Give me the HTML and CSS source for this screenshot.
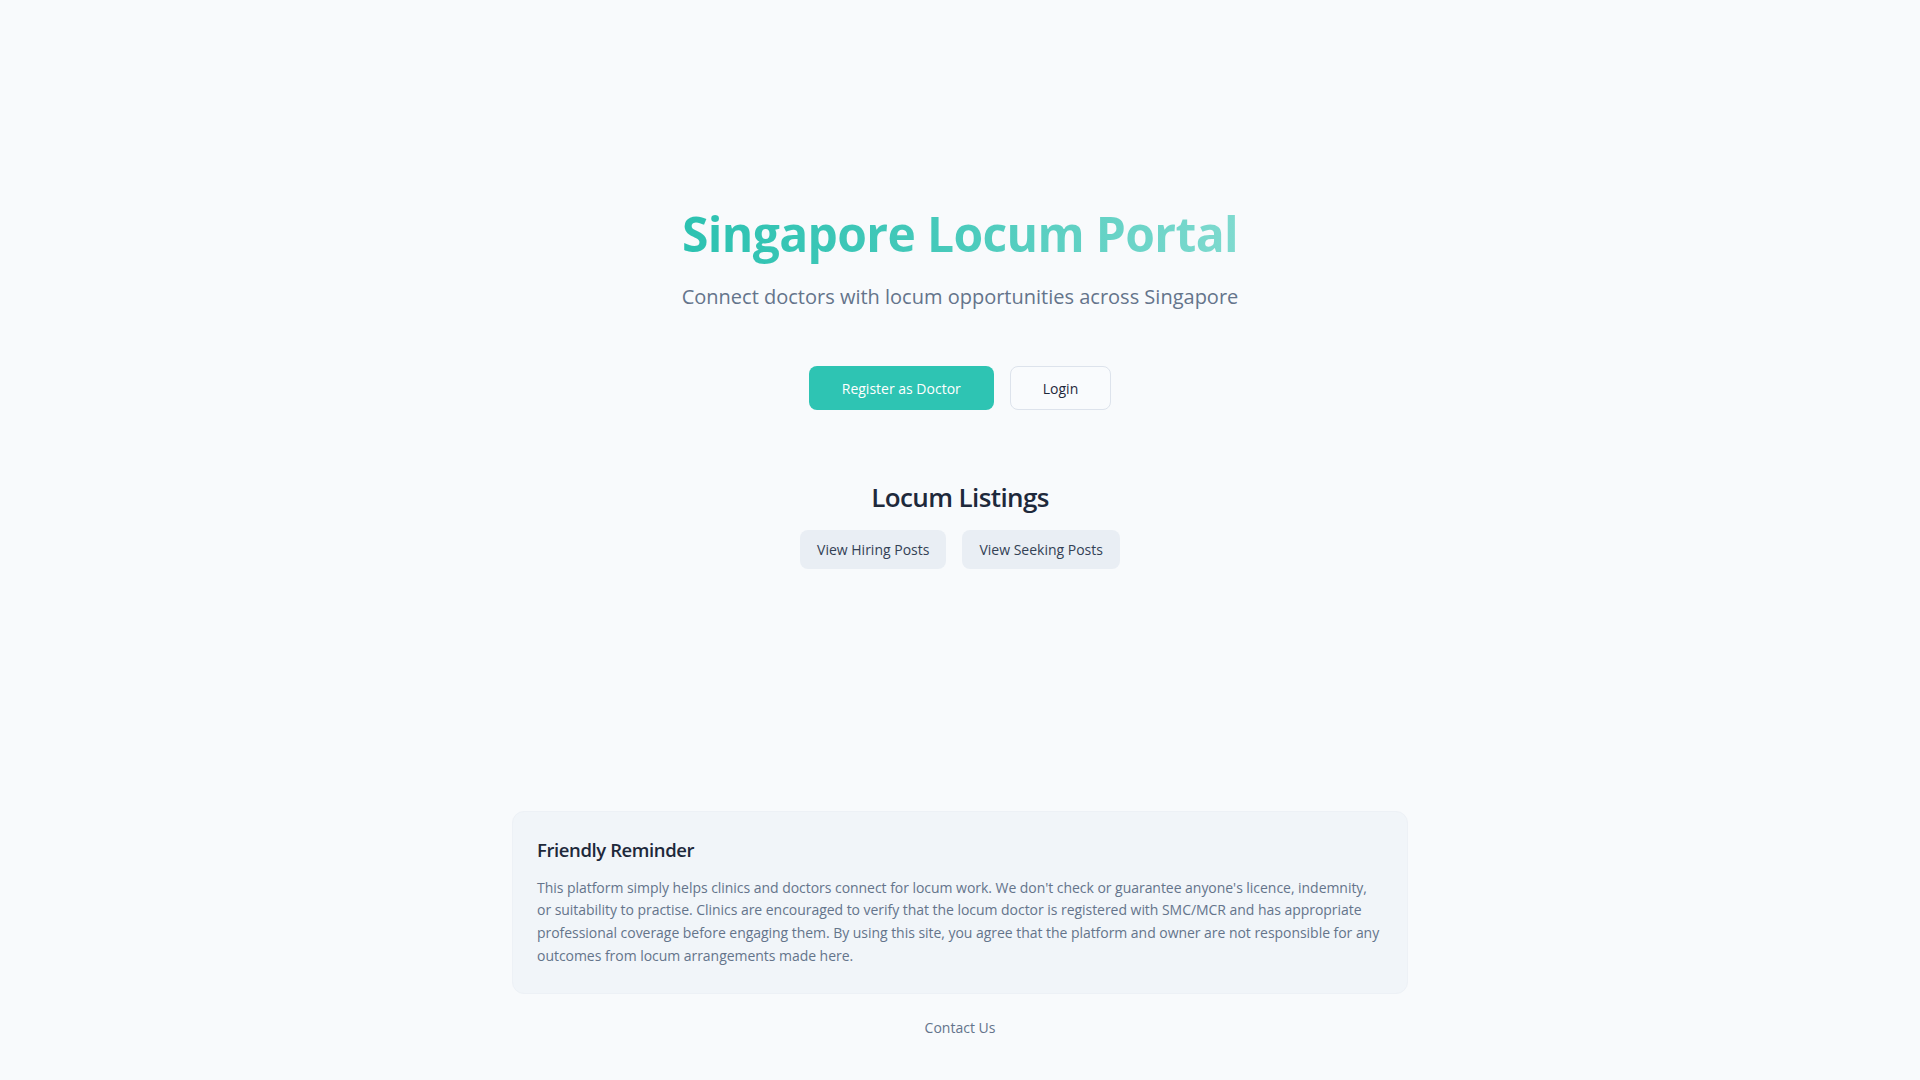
FILE: index.html
```html
<!DOCTYPE html>
<html lang="en">
<head>
<meta charset="utf-8">
<title>Singapore Locum Portal</title>
<link rel="stylesheet" href="styles.css">
</head>
<body>
<main class="page">
  <section class="hero">
    <h1 class="title">Singapore Locum Portal</h1>
    <p class="subtitle">Connect doctors with locum opportunities across Singapore</p>
    <div class="actions">
      <a class="btn btn-primary" href="#">Register as Doctor</a>
      <a class="btn btn-outline" href="#">Login</a>
    </div>
    <h2 class="listings-title">Locum Listings</h2>
    <div class="listings-actions">
      <a class="btn-soft" href="#">View Hiring Posts</a>
      <a class="btn-soft" href="#">View Seeking Posts</a>
    </div>
  </section>
  <section class="reminder">
    <h3 class="reminder-title">Friendly Reminder</h3>
    <p class="reminder-text">This platform simply helps clinics and doctors connect for locum work. We don't check or guarantee anyone's licence, indemnity, or suitability to practise. Clinics are encouraged to verify that the locum doctor is registered with SMC/MCR and has appropriate professional coverage before engaging them. By using this site, you agree that the platform and owner are not responsible for any outcomes from locum arrangements made here.</p>
  </section>
  <footer class="footer">
    <a class="footer-link" href="#">Contact Us</a>
  </footer>
</main>
</body>
</html>
```

FILE: styles.css
```css
* { box-sizing: border-box; }
html, body { margin: 0; padding: 0; }
body {
  background: #f8fafc;
  font-family: "Open Sans", "Noto Sans", sans-serif;
  color: #1e293b;
  min-height: 100vh;
}
a { text-decoration: none; }
.page {
  display: flex;
  flex-direction: column;
  align-items: center;
  padding-top: 203.5px;
}
.hero {
  display: flex;
  flex-direction: column;
  align-items: center;
}
.title {
  margin: 0;
  font-size: 48px;
  line-height: 60px;
  font-weight: 700;
  letter-spacing: -0.65px;
  background: linear-gradient(90deg, #2cc2b1 0%, #45c9ba 45%, #7fdacf 100%);
  -webkit-background-clip: text;
  background-clip: text;
  color: transparent;
}
.subtitle {
  margin: 19.5px 0 0;
  font-size: 20px;
  line-height: 28px;
  color: #64748b;
}
.actions {
  margin-top: 55px;
  display: flex;
  gap: 16px;
}
.btn {
  height: 44px;
  display: inline-flex;
  align-items: center;
  justify-content: center;
  padding: 0 33px;
  border-radius: 8px;
  font-size: 14px;
  font-weight: 500;
}
.btn-primary {
  background: #2ec4b3;
  color: #ffffff;
}
.btn-outline {
  padding: 0 32px;
  background: #f9fbfd;
  color: #1e293b;
  border: 1px solid #dde3ec;
}
.listings-title {
  margin: 69px 0 0;
  font-size: 26px;
  line-height: 36px;
  font-weight: 600;
  letter-spacing: -0.6px;
  color: #1e293b;
}
.listings-actions {
  margin-top: 15px;
  display: flex;
  gap: 16px;
}
.btn-soft {
  height: 39px;
  display: inline-flex;
  align-items: center;
  padding: 0 17px;
  border-radius: 8px;
  background: #e9eef4;
  color: #334155;
  font-size: 14px;
  font-weight: 500;
}
.reminder {
  margin-top: 242px;
  width: 896px;
  background: #f1f5f9;
  border: 1px solid #edf1f6;
  border-radius: 12px;
  padding: 24px 24px 25px;
}
.reminder-title {
  margin: 0;
  font-size: 18.5px;
  line-height: 28px;
  font-weight: 600;
  letter-spacing: -0.4px;
  color: #1e293b;
}
.reminder-text {
  margin: 12.5px 0 0;
  font-size: 14px;
  line-height: 22.75px;
  letter-spacing: -0.04px;
  color: #64748b;
}
.footer {
  margin-top: 24px;
  padding-bottom: 40px;
}
.footer-link {
  font-size: 14px;
  line-height: 20px;
  color: #64748b;
  display: block;
}
```
